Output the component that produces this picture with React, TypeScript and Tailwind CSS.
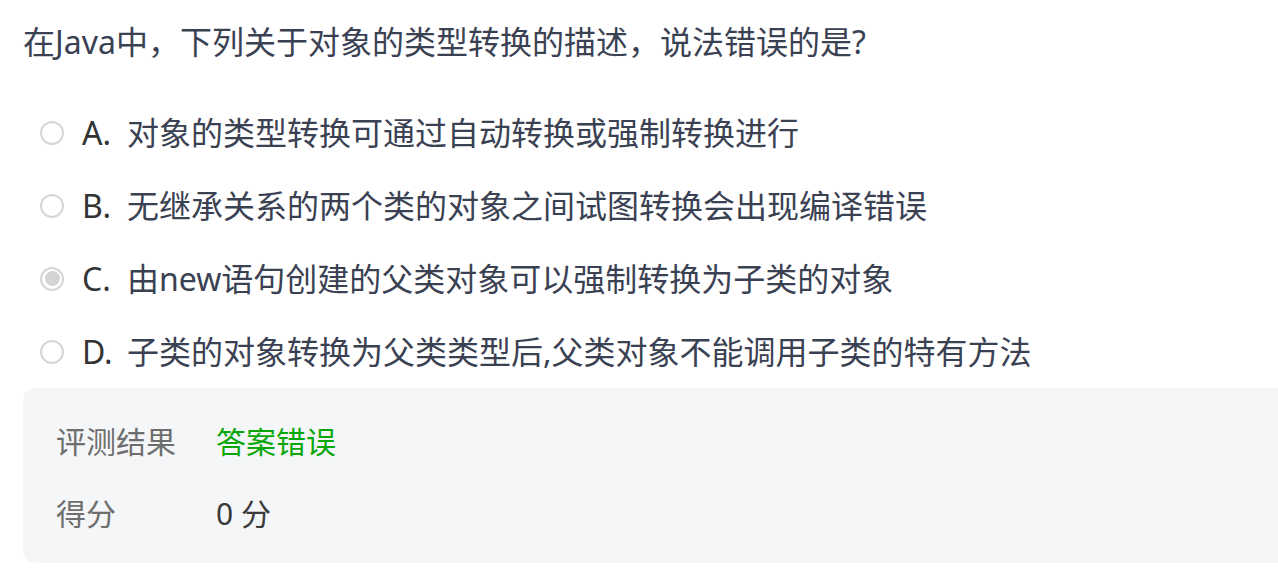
const options = [
  { key: "A", text: "对象的类型转换可通过自动转换或强制转换进行", checked: false },
  { key: "B", text: "无继承关系的两个类的对象之间试图转换会出现编译错误", checked: false },
  { key: "C", text: "由new语句创建的父类对象可以强制转换为子类的对象", checked: true },
  { key: "D", text: "子类的对象转换为父类类型后,父类对象不能调用子类的特有方法", checked: false },
];

function Radio({ checked }: { checked: boolean }) {
  return (
    <span className="flex h-[24px] w-[24px] shrink-0 items-center justify-center rounded-full border-2 border-[#d6d6d6] bg-white">
      {checked && <span className="h-[15px] w-[15px] rounded-full bg-[#d4d4d4]" />}
    </span>
  );
}

export default function App() {
  return (
    <div
      className="min-h-screen overflow-hidden bg-white pt-[18px]"
      style={{ fontFamily: '"Noto Sans", "Noto Sans CJK SC", sans-serif' }}
    >
      <h1 className="pl-[23px] text-[32px] leading-[48px] font-normal text-[#3a4152]">
        在Java中，下列关于对象的类型转换的描述，说法错误的是?
      </h1>

      <div className="mt-[30px] pl-[40px]">
        {options.map((o) => (
          <div key={o.key} className="flex h-[73px] items-center">
            <Radio checked={o.checked} />
            <span className="ml-[18px] w-[45px] shrink-0 text-[32px] text-[#333333]">
              {o.key}.
            </span>
            <span className="text-[32px] text-[#3a4152]">{o.text}</span>
          </div>
        ))}
      </div>

      <div className="ml-[23px] rounded-l-[12px] bg-[#f5f6f8] pt-[17px] pb-[14px] pl-[33px]">
        <div className="flex h-[72px] items-center text-[30px]">
          <span className="w-[160px] text-[#6e6e6e]">评测结果</span>
          <span className="text-[#0aa70a]">答案错误</span>
        </div>
        <div className="flex h-[72px] items-center text-[30px]">
          <span className="w-[160px] text-[#6e6e6e]">得分</span>
          <span className="text-[#3a3a3a]">0 分</span>
        </div>
      </div>
    </div>
  );
}
